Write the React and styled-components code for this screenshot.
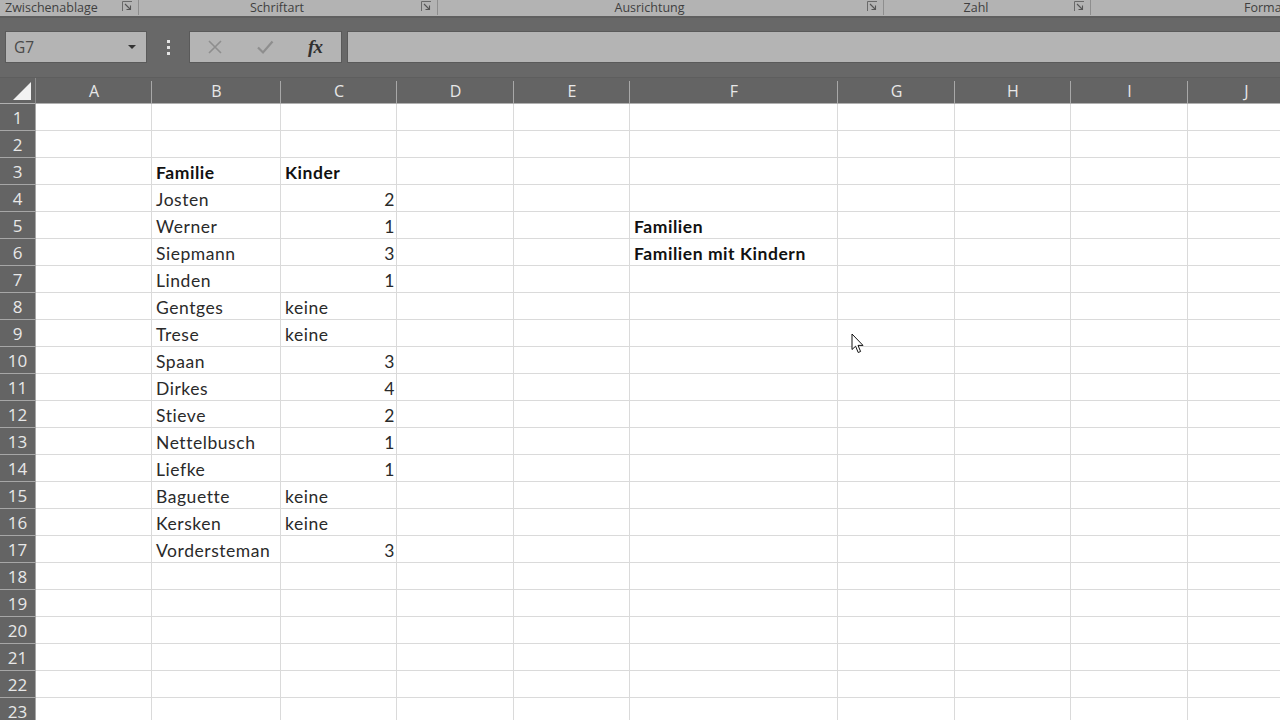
import React from "react";
import styled, { createGlobalStyle } from "styled-components";

const GlobalStyle = createGlobalStyle`
  html, body { margin: 0; padding: 0; background: #ffffff; overflow: hidden; }
  body { font-family: Lato, "Open Sans", "Liberation Sans", sans-serif; }
  * { box-sizing: border-box; }
`;

const Page = styled.div`
  width: 1280px;
  height: 720px;
  overflow: hidden;
  position: relative;
  background: #ffffff;
`;

const RibbonLabels = styled.div`
  display: flex;
  height: 18px;
  background: #b3b3b3;
  border-bottom: 2px solid #5f5f5f;
  overflow: hidden;
`;

const Group = styled.div`
  flex: 0 0 ${(p) => p.$w}px;
  display: flex;
  align-items: center;
  position: relative;
  padding-left: ${(p) => (p.$left ? "5px" : "0")};
  justify-content: ${(p) => (p.$left ? "flex-start" : "center")};
  border-right: ${(p) => (p.$sep ? "1px solid #8e8e8e" : "none")};
  height: 15px;
`;

const GroupLabel = styled.span`
  font-family: "Open Sans", "Noto Sans", sans-serif;
  font-size: 12.5px;
  color: #3f3f3f;
  line-height: 15px;
  margin-top: -1px;
  white-space: nowrap;
  padding-right: ${(p) => p.$pad || 0}px;
  margin-left: ${(p) => p.$ml || 0}px;
`;

const LauncherArrow = styled.svg`
  position: absolute;
  right: 5px;
  top: 1px;
`;

const FormulaBar = styled.div`
  height: 60px;
  background: #686868;
  display: flex;
  align-items: flex-start;
  padding-top: 13px;
  padding-left: 5px;
  border-bottom: 1px solid #5e5e5e;
`;

const NameBox = styled.div`
  width: 142px;
  height: 32px;
  background: #b4b4b4;
  border: 1px solid #5a5a5a;
  display: flex;
  align-items: center;
  justify-content: space-between;
  padding: 0 10px 0 8px;
  font-family: "Open Sans", "Noto Sans", sans-serif;
  font-size: 15.5px;
  color: #4a4a4a;
`;

const Caret = styled.span`
  width: 0;
  height: 0;
  border-left: 4px solid transparent;
  border-right: 4px solid transparent;
  border-top: 4px solid #333;
`;

const Dots = styled.div`
  width: 42px;
  height: 32px;
  display: flex;
  flex-direction: column;
  align-items: center;
  justify-content: center;
  gap: 3px;
`;

const Dot = styled.span`
  width: 3px;
  height: 3px;
  background: #e4e4e4;
`;

const FxBox = styled.div`
  width: 153px;
  height: 32px;
  background: #b4b4b4;
  border: 1px solid #5a5a5a;
  display: flex;
  align-items: center;
`;

const FxSlot = styled.div`
  width: 50px;
  height: 100%;
  display: flex;
  align-items: center;
  justify-content: center;
`;

const FxText = styled.span`
  font-family: "Liberation Serif", "DejaVu Serif", serif;
  font-style: italic;
  font-weight: bold;
  font-size: 19px;
  color: #303030;
  letter-spacing: -1px;
`;

const FormulaInput = styled.div`
  flex: 1;
  margin-left: 5px;
  height: 32px;
  background: #b4b4b4;
  border: 1px solid #5a5a5a;
  border-right: none;
`;

const Sheet = styled.div`
  display: grid;
  grid-template-columns: 36px 116px 129px 116px 117px 116px 208px 117px 116px 117px 117px;
  grid-auto-rows: 27px;
  grid-template-rows: 26px;
  width: 1305px;
`;

const Corner = styled.div`
  background: #646464;
  border-right: 1px solid #8a8a8a;
  border-bottom: 1px solid #b0b0b0;
  position: relative;
`;

const CornerTri = styled.span`
  position: absolute;
  right: 4px;
  bottom: 3px;
  width: 0;
  height: 0;
  border-left: 18px solid transparent;
  border-bottom: 18px solid #f2f2f2;
`;

const ColHead = styled.div`
  background: #646464;
  border-bottom: 1px solid #b0b0b0;
  display: flex;
  align-items: center;
  justify-content: center;
  color: #e8e8e8;
  font-family: "Open Sans", "Noto Sans", sans-serif;
  font-size: 16px;
  position: relative;
  &::after {
    content: "";
    position: absolute;
    right: 0;
    top: 3px;
    bottom: 0;
    width: 1px;
    background: #a8a8a8;
  }
`;

const RowHead = styled.div`
  background: #646464;
  border-bottom: 1px solid #a6a6a6;
  border-right: 1px solid #a6a6a6;
  display: flex;
  align-items: center;
  justify-content: center;
  color: #e8e8e8;
  font-family: "Open Sans", "Noto Sans", sans-serif;
  font-size: 17px;
  padding-top: 1px;
`;

const Cell = styled.div`
  border-right: 1px solid #dadada;
  border-bottom: 1px solid #dadada;
  display: flex;
  align-items: center;
  justify-content: ${(p) => (p.$right ? "flex-end" : "flex-start")};
  padding: 2px ${(p) => (p.$right ? "1px" : "4px")} 0 4px;
  font-family: Lato, "Liberation Sans", sans-serif;
  font-size: 17.5px;
  letter-spacing: 0.55px;
  font-weight: ${(p) => (p.$bold ? 700 : 400)};
  color: ${(p) => (p.$bold ? "#111" : "#2a2a2a")};
  white-space: nowrap;
  overflow: visible;
`;

const Cursor = styled.svg`
  position: absolute;
  left: 851px;
  top: 333px;
`;

const cols = ["A", "B", "C", "D", "E", "F", "G", "H", "I", "J"];

const data = {
  3: { B: ["Familie", "b"], C: ["Kinder", "b"] },
  4: { B: ["Josten"], C: ["2", "r"] },
  5: { B: ["Werner"], C: ["1", "r"], F: ["Familien", "b"] },
  6: { B: ["Siepmann"], C: ["3", "r"], F: ["Familien mit Kindern", "b"] },
  7: { B: ["Linden"], C: ["1", "r"] },
  8: { B: ["Gentges"], C: ["keine"] },
  9: { B: ["Trese"], C: ["keine"] },
  10: { B: ["Spaan"], C: ["3", "r"] },
  11: { B: ["Dirkes"], C: ["4", "r"] },
  12: { B: ["Stieve"], C: ["2", "r"] },
  13: { B: ["Nettelbusch"], C: ["1", "r"] },
  14: { B: ["Liefke"], C: ["1", "r"] },
  15: { B: ["Baguette"], C: ["keine"] },
  16: { B: ["Kersken"], C: ["keine"] },
  17: { B: ["Vordersteman"], C: ["3", "r"] },
};

function Arrow() {
  return (
    <LauncherArrow width="11" height="11" viewBox="0 0 11 11">
      <path d="M0.5 10V0.5H10" fill="none" stroke="#6a6a6a" strokeWidth="1" />
      <path d="M3 3L8.5 8.5M8.5 4.5V8.5H4.5" fill="none" stroke="#555" strokeWidth="1.1" />
    </LauncherArrow>
  );
}

export default function App() {
  const rows = Array.from({ length: 23 }, (_, i) => i + 1);
  return (
    <Page>
      <GlobalStyle />
      <RibbonLabels>
        <Group $w={139} $left $sep>
          <GroupLabel>Zwischenablage</GroupLabel>
          <Arrow />
        </Group>
        <Group $w={299} $sep>
          <GroupLabel $pad={22}>Schriftart</GroupLabel>
          <Arrow />
        </Group>
        <Group $w={446} $sep>
          <GroupLabel $pad={22}>Ausrichtung</GroupLabel>
          <Arrow />
        </Group>
        <Group $w={207} $sep>
          <GroupLabel $pad={22}>Zahl</GroupLabel>
          <Arrow />
        </Group>
        <Group $w={189} $left>
          <GroupLabel $ml={148}>Formatvorlagen</GroupLabel>
        </Group>
      </RibbonLabels>
      <FormulaBar>
        <NameBox>
          <span>G7</span>
          <Caret />
        </NameBox>
        <Dots>
          <Dot />
          <Dot />
          <Dot />
        </Dots>
        <FxBox>
          <FxSlot>
            <svg width="16" height="16" viewBox="0 0 16 16">
              <path d="M2 2L14 14M14 2L2 14" stroke="#8e8e8e" strokeWidth="1.6" fill="none" />
            </svg>
          </FxSlot>
          <FxSlot>
            <svg width="18" height="16" viewBox="0 0 18 16">
              <path d="M2 8.5L7 13.5L16.5 2.5" stroke="#8e8e8e" strokeWidth="2.2" fill="none" />
            </svg>
          </FxSlot>
          <FxSlot>
            <FxText>fx</FxText>
          </FxSlot>
        </FxBox>
        <FormulaInput />
      </FormulaBar>
      <Sheet>
        <Corner>
          <CornerTri />
        </Corner>
        {cols.map((c) => (
          <ColHead key={c}>{c}</ColHead>
        ))}
        {rows.map((r) => (
          <React.Fragment key={r}>
            <RowHead>{r}</RowHead>
            {cols.map((c) => {
              const d = data[r] && data[r][c];
              return (
                <Cell key={c} $bold={d && d[1] === "b"} $right={d && d[1] === "r"}>
                  {d ? d[0] : ""}
                </Cell>
              );
            })}
          </React.Fragment>
        ))}
      </Sheet>
      <Cursor width="14" height="22" viewBox="0 0 14 22">
        <path
          d="M1 1V16.5L4.6 13.2L7.2 19.5L9.6 18.5L7 12.4H12L1 1Z"
          fill="#ffffff"
          stroke="#111"
          strokeWidth="1"
          strokeLinejoin="round"
        />
      </Cursor>
    </Page>
  );
}
